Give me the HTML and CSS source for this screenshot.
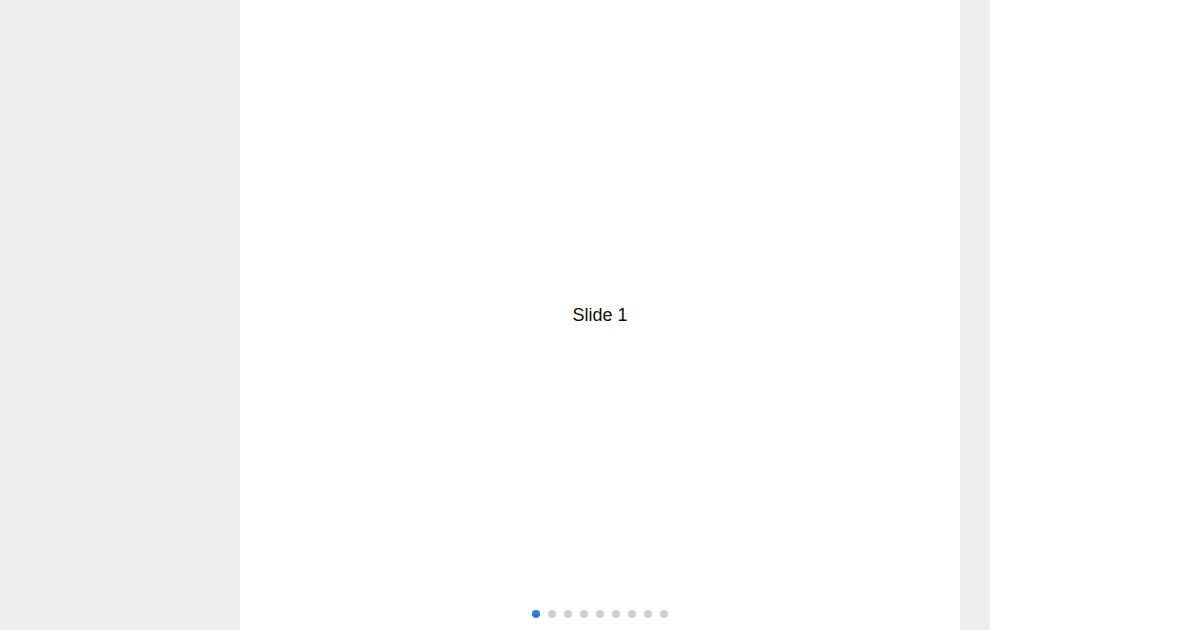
FILE: index.html
```html
<!DOCTYPE html>
<html>
<head>
<meta charset="utf-8">
<link rel="stylesheet" href="styles.css">
</head>
<body>
<div class="swiper">
  <div class="track">
    <div class="slide">Slide 1</div>
    <div class="slide"></div>
  </div>
  <div class="pagination">
    <span class="bullet active"></span>
    <span class="bullet"></span>
    <span class="bullet"></span>
    <span class="bullet"></span>
    <span class="bullet"></span>
    <span class="bullet"></span>
    <span class="bullet"></span>
    <span class="bullet"></span>
    <span class="bullet"></span>
  </div>
</div>
</body>
</html>
```
FILE: styles.css
```css
html, body {
  margin: 0;
  padding: 0;
  height: 100%;
}
body {
  background: #eee;
  font-family: "Liberation Sans", Arial, Helvetica, sans-serif;
  font-size: 14px;
  color: #000;
}
.swiper {
  position: relative;
  width: 1200px;
  height: 630px;
  overflow: hidden;
}
.track {
  display: flex;
  gap: 30px;
  padding-left: 240px;
  height: 100%;
}
.slide {
  flex: 0 0 720px;
  height: 100%;
  background: #fff;
  display: flex;
  align-items: center;
  justify-content: center;
  font-size: 18px;
  color: #1a0d00;
}
.pagination {
  position: absolute;
  left: 0;
  right: 0;
  bottom: 12px;
  display: flex;
  justify-content: center;
  gap: 8px;
}
.bullet {
  width: 8px;
  height: 8px;
  border-radius: 50%;
  background: #d0d0d0;
}
.bullet.active {
  background: #2a7ee0;
}
```
